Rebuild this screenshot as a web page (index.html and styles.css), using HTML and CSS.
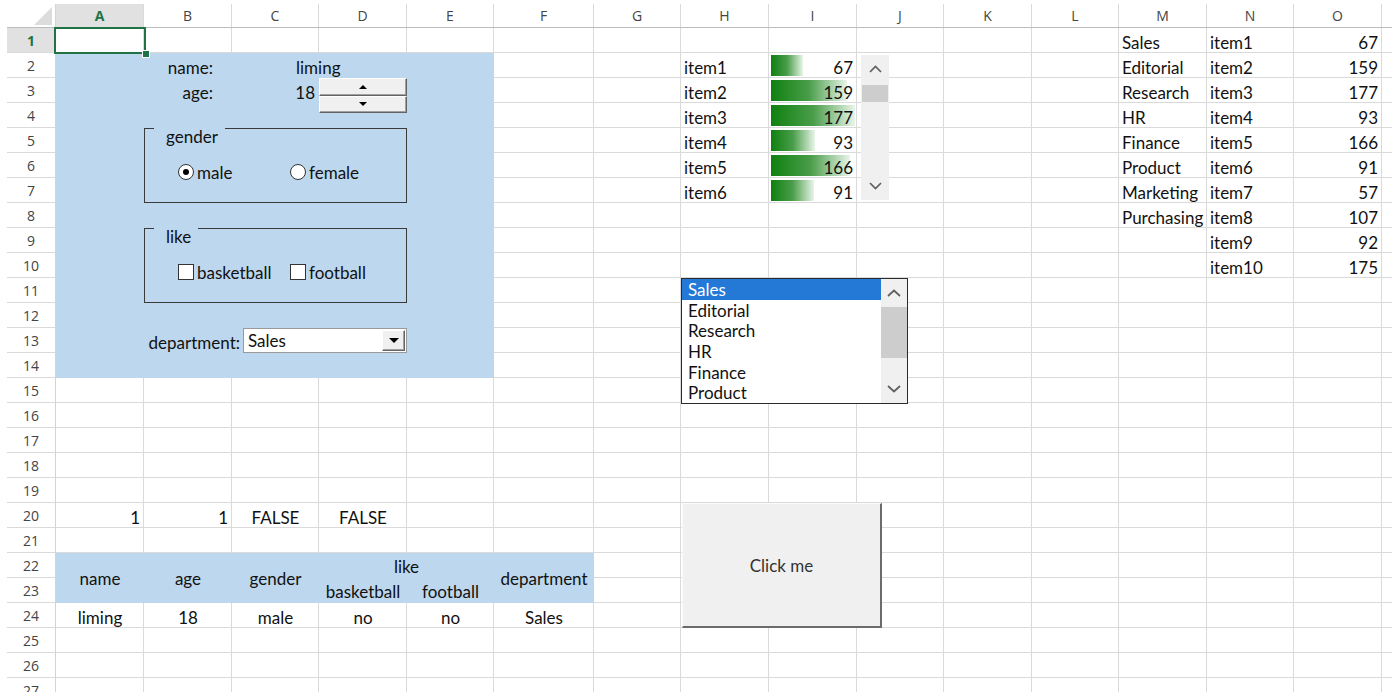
FILE: index.html
```html
<!DOCTYPE html>
<html lang="en">
<head>
<meta charset="utf-8">
<title>Form controls sheet</title>
<link rel="stylesheet" href="styles.css">
</head>
<body>
<div class="sheet">
  <div class="corner"><svg width="18" height="18" viewBox="0 0 18 18"><polygon points="18,0 18,18 0,18" fill="#dcdcdc"/></svg></div>

  <div class="colhead">
    <div class="sel">A</div><div>B</div><div>C</div><div>D</div><div>E</div><div>F</div><div>G</div><div>H</div><div>I</div><div>J</div><div>K</div><div>L</div><div>M</div><div>N</div><div>O</div><div></div>
  </div>

  <div class="rowhead">
    <div class="sel">1</div><div>2</div><div>3</div><div>4</div><div>5</div><div>6</div><div>7</div><div>8</div><div>9</div><div>10</div><div>11</div><div>12</div><div>13</div><div>14</div><div>15</div><div>16</div><div>17</div><div>18</div><div>19</div><div>20</div><div>21</div><div>22</div><div>23</div><div>24</div><div>25</div><div>26</div><div>27</div>
  </div>

  <div class="strips">
    <div></div><div></div><div></div><div></div><div></div><div></div><div></div><div></div><div></div><div></div><div></div><div></div><div></div><div></div><div></div><div></div>
  </div>

  <div class="selection"></div>

  <div class="form">
    <div class="f-line">
      <span class="f-lab">name:</span><span class="f-name">liming</span>
    </div>
    <div class="f-line">
      <span class="f-lab">age:</span><span class="f-age">18</span>
      <div class="spin">
        <div class="spin-btn"><span class="tri-up"></span></div>
        <div class="spin-btn"><span class="tri-down"></span></div>
      </div>
    </div>
    <div class="gbox">
      <span class="gtitle">gender</span>
      <div class="opts">
        <div class="opt first"><span class="radio on"></span><span>male</span></div>
        <div class="opt"><span class="radio"></span><span>female</span></div>
      </div>
    </div>
    <div class="gbox">
      <span class="gtitle">like</span>
      <div class="opts">
        <div class="opt first"><span class="check"></span><span>basketball</span></div>
        <div class="opt"><span class="check"></span><span>football</span></div>
      </div>
    </div>
    <div class="f-line dept">
      <span class="dept-lab">department:</span>
      <div class="combo">
        <span class="combo-text">Sales</span>
        <div class="dd"><span class="tri-dd"></span></div>
      </div>
    </div>
  </div>

  <div class="bars">
    <div class="nm">item1</div><div class="val"><span class="bar" style="width:32px"></span><span class="num">67</span></div>
    <div class="nm">item2</div><div class="val"><span class="bar" style="width:76px"></span><span class="num">159</span></div>
    <div class="nm">item3</div><div class="val"><span class="bar" style="width:84px"></span><span class="num">177</span></div>
    <div class="nm">item4</div><div class="val"><span class="bar" style="width:44px"></span><span class="num">93</span></div>
    <div class="nm">item5</div><div class="val"><span class="bar" style="width:79px"></span><span class="num">166</span></div>
    <div class="nm">item6</div><div class="val"><span class="bar" style="width:43px"></span><span class="num">91</span></div>
  </div>

  <div class="vscroll">
    <div class="arrow"><svg width="13" height="8" viewBox="0 0 13 8"><polyline points="1,7 6.5,1.5 12,7" fill="none" stroke="#5f5f5f" stroke-width="1.7"/></svg></div>
    <div class="thumb small"></div>
    <div class="spacer"></div>
    <div class="arrow"><svg width="13" height="8" viewBox="0 0 13 8"><polyline points="1,1 6.5,6.5 12,1" fill="none" stroke="#5f5f5f" stroke-width="1.7"/></svg></div>
  </div>

  <div class="listbox">
    <div class="lb-items">
      <div class="lb-item on">Sales</div>
      <div class="lb-item">Editorial</div>
      <div class="lb-item">Research</div>
      <div class="lb-item">HR</div>
      <div class="lb-item">Finance</div>
      <div class="lb-item">Product</div>
    </div>
    <div class="lb-scroll">
      <div class="arrow"><svg width="14" height="8" viewBox="0 0 14 8"><polyline points="1,7 7,1.5 13,7" fill="none" stroke="#5f5f5f" stroke-width="1.7"/></svg></div>
      <div class="thumb big"></div>
      <div class="spacer"></div>
      <div class="arrow"><svg width="14" height="8" viewBox="0 0 14 8"><polyline points="1,1 7,6.5 13,1" fill="none" stroke="#5f5f5f" stroke-width="1.7"/></svg></div>
    </div>
  </div>

  <div class="btn">Click me</div>

  <div class="depts">
    <div class="t">Sales</div><div class="t">item1</div><div class="n">67</div>
    <div class="t">Editorial</div><div class="t">item2</div><div class="n">159</div>
    <div class="t">Research</div><div class="t">item3</div><div class="n">177</div>
    <div class="t">HR</div><div class="t">item4</div><div class="n">93</div>
    <div class="t">Finance</div><div class="t">item5</div><div class="n">166</div>
    <div class="t">Product</div><div class="t">item6</div><div class="n">91</div>
    <div class="t">Marketing</div><div class="t">item7</div><div class="n">57</div>
    <div class="t">Purchasing</div><div class="t">item8</div><div class="n">107</div>
    <div class="t"></div><div class="t">item9</div><div class="n">92</div>
    <div class="t"></div><div class="t">item10</div><div class="n">175</div>
  </div>

  <div class="result">
    <div class="n">1</div><div class="n">1</div><div class="c">FALSE</div><div class="c">FALSE</div><div></div><div></div>
    <div></div><div></div><div></div><div></div><div></div><div></div>
    <div class="h h-name">name</div>
    <div class="h h-age">age</div>
    <div class="h h-gender">gender</div>
    <div class="h h-like">like</div>
    <div class="h h-dept">department</div>
    <div class="h h-bb">basketball</div>
    <div class="h h-fb">football</div>
    <div class="c">liming</div><div class="c">18</div><div class="c">male</div><div class="c">no</div><div class="c">no</div><div class="c">Sales</div>
  </div>
</div>
</body>
</html>
```

FILE: styles.css
```css
:root {
  --cols: 88px 88px 87px 88px 87px 100px 87px 88px 88px 87px 88px 87px 88px 87px 88px 40px;
  --grid: #dadada;
  --blue: #bdd7ee;
  --green: #217346;
}

html, body {
  width: 1392px;
  height: 692px;
  overflow: hidden;
  background: #fff;
}

body {
  margin: 0;
  padding: 4px 0 0 7px;
  box-sizing: border-box;
  font-family: Lato, "Open Sans", sans-serif;
  font-size: 17px;
  color: #111;
}

.sheet {
  display: grid;
  grid-template-columns: 49px var(--cols);
  grid-template-rows: 24px repeat(27, 25px);
}

/* headers */
.corner {
  grid-area: 1 / 1;
  display: flex;
  justify-content: flex-end;
  align-items: flex-end;
  padding: 0 3px 2px 0;
  border-bottom: 1px solid #bcbcbc;
  border-right: 1px solid #d4d4d4;
}
.corner svg { display: block; }

.colhead {
  grid-row: 1;
  grid-column: 2 / -1;
  display: grid;
  grid-template-columns: var(--cols);
  border-bottom: 1px solid #bcbcbc;
  font-family: "Open Sans", sans-serif;
  font-size: 14px;
  color: #444;
}
.colhead > div {
  border-right: 1px solid #dadada;
  text-align: center;
  line-height: 23px;
}
.colhead > .sel {
  background: #e1e1e1;
  color: var(--green);
  font-weight: 700;
}

.rowhead {
  grid-column: 1;
  grid-row: 2 / -1;
  display: grid;
  grid-auto-rows: 25px;
  border-right: 1px solid #d4d4d4;
  font-family: "Open Sans", sans-serif;
  font-size: 14px;
  color: #444;
}
.rowhead > div {
  border-bottom: 1px solid #dadada;
  text-align: center;
  line-height: 25px;
}
.rowhead > .sel {
  background: #e1e1e1;
  color: var(--green);
  font-weight: 700;
}

/* gridlines */
.strips {
  grid-column: 2 / -1;
  grid-row: 2 / -1;
  display: grid;
  grid-template-columns: var(--cols);
  grid-template-rows: 100%;
  background: repeating-linear-gradient(to bottom, transparent 0 24px, var(--grid) 24px 25px);
}
.strips > div {
  border-right: 1px solid var(--grid);
}

/* active cell */
.selection {
  grid-area: 2 / 2;
  margin: -1px -2px -1px -2px;
  border: 2px solid var(--green);
  position: relative;
}
.selection::after {
  content: "";
  position: absolute;
  right: -5px;
  bottom: -5px;
  width: 6px;
  height: 6px;
  background: var(--green);
  outline: 1px solid #fff;
}

/* form area */
.form {
  grid-area: 3 / 2 / 16 / 7;
  background: var(--blue);
  display: flex;
  flex-direction: column;
  align-items: flex-start;
}
.f-line {
  display: flex;
  align-items: flex-start;
  height: 25px;
  line-height: 29px;
}
.f-lab {
  width: 157px;
  text-align: right;
}
.f-name { margin-left: 83px; }
.f-age {
  width: 102px;
  text-align: right;
}

.spin {
  margin-left: 4px;
  width: 88px;
  height: 35px;
  display: flex;
  flex-direction: column;
}
.spin-btn {
  flex: 1;
  box-sizing: border-box;
  background: #f0f0f0;
  border: 1px solid;
  border-color: #fff #646464 #646464 #fff;
  box-shadow: inset -1px -1px 0 #a0a0a0;
  display: flex;
  align-items: center;
  justify-content: center;
}
.tri-up, .tri-down {
  width: 0;
  height: 0;
  border-left: 4px solid transparent;
  border-right: 4px solid transparent;
}
.tri-up { border-bottom: 4px solid #000; }
.tri-down { border-top: 4px solid #000; }

.gbox {
  margin: 25px 0 0 88px;
  width: 263px;
  height: 75px;
  box-sizing: border-box;
  border: 1px solid #3a3a3a;
  display: flex;
  flex-direction: column;
  align-items: flex-start;
}
.gtitle {
  margin: -1px 0 0 9px;
  padding: 0 7px 0 12px;
  line-height: 17px;
  background: var(--blue);
}
.opts {
  display: flex;
  align-items: center;
  height: 20px;
  margin-top: 17px;
  padding-left: 33px;
}
.opt {
  display: flex;
  align-items: center;
  gap: 3px;
}
.opt.first { width: 112px; }
.radio {
  width: 16px;
  height: 16px;
  box-sizing: border-box;
  border: 1px solid #333;
  border-radius: 50%;
  background: #fff;
  display: flex;
  align-items: center;
  justify-content: center;
}
.radio.on::after {
  content: "";
  width: 6px;
  height: 6px;
  border-radius: 50%;
  background: #000;
}
.check {
  width: 16px;
  height: 16px;
  box-sizing: border-box;
  border: 1px solid #333;
  background: #fff;
}

.dept { margin-top: 25px; }
.dept-lab {
  width: 187px;
  box-sizing: border-box;
  padding-right: 3px;
  text-align: right;
}
.combo {
  width: 164px;
  height: 25px;
  box-sizing: border-box;
  border: 1px solid #9a9a9a;
  background: #fff;
  display: flex;
  align-items: center;
  padding: 1px;
  line-height: 21px;
}
.combo-text {
  flex: 1;
  padding-left: 3px;
}
.dd {
  width: 23px;
  height: 21px;
  box-sizing: border-box;
  background: #f0f0f0;
  border: 1px solid;
  border-color: #fff #646464 #646464 #fff;
  box-shadow: inset -1px -1px 0 #a0a0a0;
  display: flex;
  align-items: center;
  justify-content: center;
}
.tri-dd {
  width: 0;
  height: 0;
  border-left: 5px solid transparent;
  border-right: 5px solid transparent;
  border-top: 5px solid #000;
}

/* data bars */
.bars {
  grid-area: 3 / 9 / 9 / 11;
  display: grid;
  grid-template-columns: 88px 88px;
  grid-auto-rows: 25px;
}
.nm, .t {
  padding: 2px 0 0 3px;
  line-height: 25px;
  white-space: nowrap;
}
.val {
  display: grid;
}
.val > * { grid-area: 1 / 1; }
.bar {
  align-self: start;
  justify-self: start;
  height: 21px;
  margin: 2px 0 0 2px;
  background: linear-gradient(to right, #0f800f 0%, #4a9d4a 50%, #e9f5e9 100%);
}
.num {
  justify-self: end;
  padding: 2px 4px 0 0;
  line-height: 25px;
}

/* scrollbar control */
.vscroll {
  grid-area: 3 / 11 / 9 / 12;
  align-self: start;
  justify-self: start;
  margin: 2px 0 0 4px;
  width: 28px;
  height: 145px;
  background: #f0f0f0;
  display: flex;
  flex-direction: column;
}
.arrow {
  height: 28px;
  display: flex;
  align-items: center;
  justify-content: center;
  flex: none;
}
.arrow svg { display: block; }
.spacer { flex: 1; }
.thumb { background: #cdcdcd; flex: none; }
.thumb.small {
  height: 17px;
  margin: 2px 1px 0 1px;
}

/* list box */
.listbox {
  grid-area: 12 / 9 / 18 / 12;
  align-self: start;
  justify-self: start;
  width: 227px;
  height: 126px;
  box-sizing: border-box;
  border: 1px solid #2b2b2b;
  background: #fff;
  display: flex;
  overflow: hidden;
}
.lb-items { flex: 1; }
.lb-item {
  height: 20.7px;
  line-height: 21.5px;
  padding-left: 6px;
  white-space: nowrap;
}
.lb-item.on {
  background: #2478d6;
  color: #fff;
}
.lb-scroll {
  width: 26px;
  background: #f0f0f0;
  display: flex;
  flex-direction: column;
}
.thumb.big { height: 51px; }

/* button */
.btn {
  grid-area: 21 / 9 / 26 / 12;
  align-self: start;
  justify-self: start;
  margin-left: 1px;
  width: 200px;
  height: 125px;
  box-sizing: border-box;
  background: #f0f0f0;
  border-style: solid;
  border-width: 1px 2px 2px 1px;
  border-color: #fbfbfb #6b6b6b #6b6b6b #fbfbfb;
  display: flex;
  align-items: center;
  justify-content: center;
  color: #333;
}

/* M:O list */
.depts {
  grid-area: 2 / 14 / 12 / 17;
  display: grid;
  grid-template-columns: 88px 87px 88px;
  grid-auto-rows: 25px;
}
.n {
  text-align: right;
  padding: 2px 4px 0 0;
  line-height: 25px;
}

/* result table */
.result {
  grid-area: 21 / 2 / 26 / 8;
  display: grid;
  grid-template-columns: 88px 88px 87px 88px 87px 100px;
  grid-template-rows: repeat(5, 25px);
}
.c {
  text-align: center;
  padding-top: 2px;
  line-height: 25px;
  white-space: nowrap;
}
.h {
  background: var(--blue);
  display: flex;
  align-items: center;
  justify-content: center;
  white-space: nowrap;
  padding-top: 1px;
}
.h-name { grid-area: 3 / 1 / 5 / 2; }
.h-age { grid-area: 3 / 2 / 5 / 3; }
.h-gender { grid-area: 3 / 3 / 5 / 4; }
.h-like { grid-area: 3 / 4 / 4 / 6; }
.h-bb { grid-area: 4 / 4 / 5 / 5; }
.h-fb { grid-area: 4 / 5 / 5 / 6; }
.h-dept { grid-area: 3 / 6 / 5 / 7; }
```
